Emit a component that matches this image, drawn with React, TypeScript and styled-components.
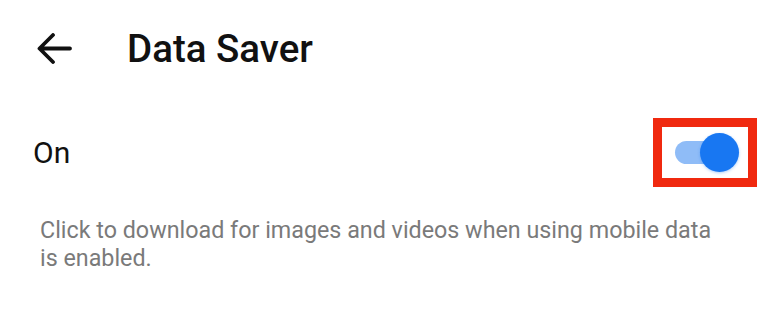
import React, { useState } from 'react';
import styled, { createGlobalStyle } from 'styled-components';

const GlobalStyle = createGlobalStyle`
  html, body {
    margin: 0;
    padding: 0;
    background: #ffffff;
  }
  body {
    font-family: Roboto, 'Noto Sans', sans-serif;
    color: #111111;
  }
`;

const Page = styled.div`
  width: 768px;
  height: 326px;
  background: #ffffff;
  display: flex;
  flex-direction: column;
`;

const Header = styled.div`
  display: flex;
  align-items: center;
  height: 96px;
  padding-left: 37px;
`;

const BackButton = styled.button`
  border: none;
  background: none;
  padding: 0;
  width: 35px;
  height: 31px;
  display: flex;
  align-items: center;
  cursor: pointer;
`;

const Title = styled.h1`
  margin: 0 0 0 55px;
  font-family: Roboto, sans-serif;
  font-weight: 500;
  font-size: 38.5px;
  color: #111111;
`;

const SettingRow = styled.div`
  display: flex;
  align-items: center;
  justify-content: space-between;
  padding: 22px 11px 0 33px;
`;

const SettingLabel = styled.span`
  font-family: Roboto, sans-serif;
  font-size: 30px;
  color: #111111;
`;

const Highlight = styled.div`
  border: 9px solid #f0290f;
  width: 86px;
  height: 51px;
  display: flex;
  align-items: center;
  justify-content: center;
`;

const Track = styled.div<{ $on: boolean }>`
  position: relative;
  width: 54px;
  height: 23px;
  border-radius: 12px;
  background: ${(p) => (p.$on ? '#8fbcf7' : '#c8c8c8')};
  margin-right: 6px;
  cursor: pointer;
`;

const Thumb = styled.div<{ $on: boolean }>`
  position: absolute;
  top: -8px;
  left: ${(p) => (p.$on ? '25px' : '-6px')};
  width: 39px;
  height: 39px;
  border-radius: 50%;
  background: ${(p) => (p.$on ? '#1877f2' : '#f4f4f4')};
  box-shadow: 0 1px 3px rgba(24, 119, 242, 0.35);
`;

const Description = styled.p`
  margin: 29px 0 0 40px;
  width: 690px;
  font-family: Roboto, sans-serif;
  font-size: 23.3px;
  line-height: 28px;
  color: #7a7a7a;
`;

export default function App() {
  const [on, setOn] = useState(true);

  return (
    <Page>
      <GlobalStyle />
      <Header>
        <BackButton aria-label="Back">
          <svg width="35" height="31" viewBox="0 0 35 31" fill="none">
            <path
              d="M33 15.5H3M16 2L2.5 15.5L16 29"
              stroke="#111111"
              strokeWidth="3.8"
              strokeLinecap="round"
              strokeLinejoin="round"
            />
          </svg>
        </BackButton>
        <Title>Data Saver</Title>
      </Header>
      <SettingRow>
        <SettingLabel>{on ? 'On' : 'Off'}</SettingLabel>
        <Highlight>
          <Track $on={on} onClick={() => setOn(!on)}>
            <Thumb $on={on} />
          </Track>
        </Highlight>
      </SettingRow>
      <Description>
        Click to download for images and videos when using mobile data is
        enabled.
      </Description>
    </Page>
  );
}
